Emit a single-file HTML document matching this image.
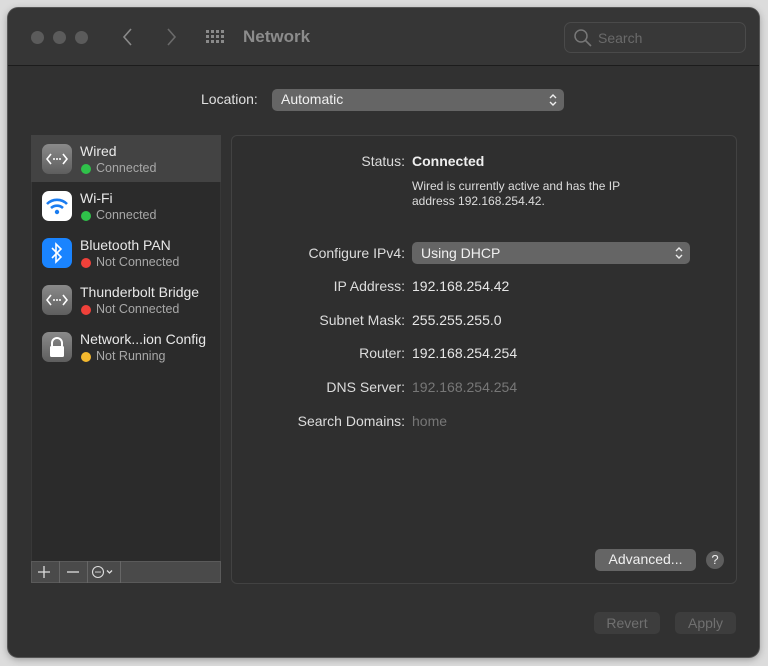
<!DOCTYPE html><html><head><style>
*{margin:0;padding:0;box-sizing:border-box}
body{width:768px;height:666px;background:#dcdcdc;font-family:"Liberation Sans",sans-serif;position:relative;overflow:hidden}
.win{position:absolute;left:8px;top:8px;width:751px;height:649px;background:#313131;border-radius:10px;overflow:hidden;box-shadow:0 0 0 1px #555,0 2px 8px rgba(0,0,0,.35)}
.tb{position:absolute;left:0;top:0;width:100%;height:58px;background:#363636;border-bottom:1px solid #1c1c1c}
.a{position:absolute;white-space:nowrap}
.dot{position:absolute;width:13px;height:13px;border-radius:50%;background:#5b5b5b;top:23px}
.lbl{position:absolute;right:354px;font-size:14px;color:#dcdcdc;text-align:right;white-space:nowrap}
.val{position:absolute;left:404px;font-size:14px;color:#e6e6e6;white-space:nowrap}
.row{position:absolute;left:23px;width:190px;height:47px}
.ic{position:absolute;left:11px;top:9px;width:30px;height:30px;border-radius:7px;background:linear-gradient(#8a8a8a,#5e5e5e)}
.nm{position:absolute;left:49px;top:8px;font-size:14px;color:#e8e8e8;white-space:nowrap}
.st{position:absolute;left:65px;top:26px;font-size:12.5px;color:#a8a8a8;white-space:nowrap}
.sd{position:absolute;left:50px;top:29px;width:10px;height:10px;border-radius:50%}
.btn{position:absolute;border-radius:5px;font-size:14px;text-align:center}
</style></head><body>
<div class="win">
<div class="tb">
<div class="dot" style="left:23px"></div><div class="dot" style="left:45px"></div><div class="dot" style="left:67px"></div>
<svg class="a" style="left:113px;top:19px" width="14" height="20"><path d="M10 2 L3 10 L10 18" stroke="#8a8a8a" stroke-width="1.6" fill="none"/></svg>
<svg class="a" style="left:156px;top:19px" width="14" height="20"><path d="M4 2 L11 10 L4 18" stroke="#6a6a6a" stroke-width="1.6" fill="none"/></svg>
<svg class="a" style="left:198px;top:22px" width="20" height="16" fill="#8a8a8a">
<g><rect x="0" y="0" width="3" height="3"/><rect x="5" y="0" width="3" height="3"/><rect x="10" y="0" width="3" height="3"/><rect x="15" y="0" width="3" height="3"/>
<rect x="0" y="5" width="3" height="3"/><rect x="5" y="5" width="3" height="3"/><rect x="10" y="5" width="3" height="3"/><rect x="15" y="5" width="3" height="3"/>
<rect x="0" y="10" width="3" height="3"/><rect x="5" y="10" width="3" height="3"/><rect x="10" y="10" width="3" height="3"/><rect x="15" y="10" width="3" height="3"/></g></svg>
<div class="a" style="left:235px;top:19px;font-size:17px;font-weight:bold;color:#8c8c8c">Network</div>
<div class="a" style="left:556px;top:14px;width:182px;height:31px;border:1px solid #4a4a4a;border-radius:7px;background:#383838"></div>
<svg class="a" style="left:565px;top:20px" width="20" height="20"><circle cx="8" cy="8" r="6" stroke="#777" stroke-width="1.5" fill="none"/><path d="M12.5 12.5 L18 18" stroke="#777" stroke-width="1.6"/></svg>
<div class="a" style="left:590px;top:22px;font-size:14px;color:#6a6a6a">Search</div>
</div>
<div class="a" style="left:193px;top:83px;font-size:14px;color:#e0e0e0">Location:</div>
<div class="a" style="left:264px;top:81px;width:292px;height:22px;border-radius:5px;background:#656565;color:#f0f0f0;font-size:14px;padding:2px 0 0 9px">Automatic
<svg class="a" style="right:6px;top:4px" width="10" height="14"><path d="M2 5 L5 2 L8 5 M2 9 L5 12 L8 9" stroke="#eee" stroke-width="1.4" fill="none"/></svg></div>
<div class="a" style="left:23px;top:127px;width:190px;height:448px;background:#2b2b2b;border:1px solid #383838"></div>
<div class="row" style="top:127px;background:#434343">
<div class="ic"></div><svg class="a" style="left:15px;top:18px" width="22" height="12"><path d="M5 1 L1 6 L5 11 M17 1 L21 6 L17 11" stroke="#fff" stroke-width="1.6" fill="none"/><circle cx="8" cy="6" r="1" fill="#fff"/><circle cx="11" cy="6" r="1" fill="#fff"/><circle cx="14" cy="6" r="1" fill="#fff"/></svg>
<div class="nm">Wired</div><div class="sd" style="background:#2fc24a"></div><div class="st">Connected</div></div>
<div class="row" style="top:174px">
<div class="ic" style="background:#fff"></div><svg class="a" style="left:14px;top:16px" width="24" height="18"><path d="M2 6 A14 14 0 0 1 22 6" stroke="#1a7cf0" stroke-width="2.6" fill="none"/><path d="M6 10 A9 9 0 0 1 18 10" stroke="#1a7cf0" stroke-width="2.6" fill="none"/><circle cx="12" cy="14" r="2.2" fill="#1a7cf0"/></svg>
<div class="nm">Wi-Fi</div><div class="sd" style="background:#2fc24a"></div><div class="st">Connected</div></div>
<div class="row" style="top:221px">
<div class="ic" style="background:#1a84ff"></div><svg class="a" style="left:19px;top:13px" width="14" height="22"><path d="M2 6 L11 15 L6 20 L6 2 L11 7 L2 16" stroke="#fff" stroke-width="1.6" fill="none"/></svg>
<div class="nm">Bluetooth PAN</div><div class="sd" style="background:#f0413a"></div><div class="st">Not Connected</div></div>
<div class="row" style="top:268px">
<div class="ic"></div><svg class="a" style="left:15px;top:18px" width="22" height="12"><path d="M5 1 L1 6 L5 11 M17 1 L21 6 L17 11" stroke="#fff" stroke-width="1.6" fill="none"/><circle cx="8" cy="6" r="1" fill="#fff"/><circle cx="11" cy="6" r="1" fill="#fff"/><circle cx="14" cy="6" r="1" fill="#fff"/></svg>
<div class="nm">Thunderbolt Bridge</div><div class="sd" style="background:#f0413a"></div><div class="st">Not Connected</div></div>
<div class="row" style="top:315px">
<div class="ic"></div><svg class="a" style="left:17px;top:13px" width="18" height="22"><path d="M4 10 V7 A5 5 0 0 1 14 7 V10" stroke="#fff" stroke-width="2" fill="none"/><rect x="2" y="10" width="14" height="11" rx="1.5" fill="#fff"/></svg>
<div class="nm">Network...ion Config</div><div class="sd" style="background:#f5b92e"></div><div class="st">Not Running</div></div>
<div class="a" style="left:23px;top:553px;width:190px;height:22px;background:#4a4a4a;border:1px solid #5a5a5a"></div>
<div class="a" style="left:51px;top:553px;width:1px;height:22px;background:#666"></div>
<div class="a" style="left:79px;top:553px;width:1px;height:22px;background:#666"></div>
<div class="a" style="left:112px;top:553px;width:1px;height:22px;background:#666"></div>
<svg class="a" style="left:29px;top:557px" width="14" height="14"><path d="M7 1 V13 M1 7 H13" stroke="#ddd" stroke-width="1.3"/></svg>
<svg class="a" style="left:58px;top:557px" width="14" height="14"><path d="M1 7 H13" stroke="#ddd" stroke-width="1.3"/></svg>
<svg class="a" style="left:83px;top:557px" width="28" height="14"><circle cx="7" cy="7" r="5.5" stroke="#ddd" stroke-width="1.1" fill="none"/><circle cx="5" cy="7" r=".8" fill="#ddd"/><circle cx="7" cy="7" r=".8" fill="#ddd"/><circle cx="9" cy="7" r=".8" fill="#ddd"/><path d="M16 5.5 L18.5 8 L21 5.5" stroke="#ddd" stroke-width="1.3" fill="none"/></svg>
<div class="a" style="left:223px;top:127px;width:506px;height:449px;background:#2f2f2f;border:1px solid #424242;border-radius:6px"></div>
<div class="lbl" style="top:145px">Status:</div>
<div class="val" style="top:145px;font-weight:bold;color:#eee">Connected</div>
<div class="val" style="top:171px;font-size:12px;line-height:15px;color:#ddd">Wired is currently active and has the IP<br>address 192.168.254.42.</div>
<div class="lbl" style="top:237px">Configure IPv4:</div>
<div class="a" style="left:404px;top:234px;width:278px;height:22px;border-radius:5px;background:#656565;color:#f0f0f0;font-size:14px;padding:3px 0 0 9px">Using DHCP
<svg class="a" style="right:6px;top:4px" width="10" height="14"><path d="M2 5 L5 2 L8 5 M2 9 L5 12 L8 9" stroke="#eee" stroke-width="1.4" fill="none"/></svg></div>
<div class="lbl" style="top:270px">IP Address:</div><div class="val" style="top:270px">192.168.254.42</div>
<div class="lbl" style="top:304px">Subnet Mask:</div><div class="val" style="top:304px">255.255.255.0</div>
<div class="lbl" style="top:337px">Router:</div><div class="val" style="top:337px">192.168.254.254</div>
<div class="lbl" style="top:371px">DNS Server:</div><div class="val" style="top:371px;color:#777">192.168.254.254</div>
<div class="lbl" style="top:405px">Search Domains:</div><div class="val" style="top:405px;color:#777">home</div>
<div class="btn" style="left:587px;top:541px;width:101px;height:22px;background:#656565;color:#f0f0f0;padding-top:2px">Advanced...</div>
<div class="a" style="left:698px;top:543px;width:18px;height:18px;border-radius:50%;background:#5e5e5e;color:#eee;font-size:13px;text-align:center;line-height:18px">?</div>
<div class="btn" style="left:586px;top:604px;width:66px;height:22px;background:#3d3d3d;color:#707070;padding-top:3px">Revert</div>
<div class="btn" style="left:667px;top:604px;width:61px;height:22px;background:#3d3d3d;color:#707070;padding-top:3px">Apply</div>
</div>
</body></html>
